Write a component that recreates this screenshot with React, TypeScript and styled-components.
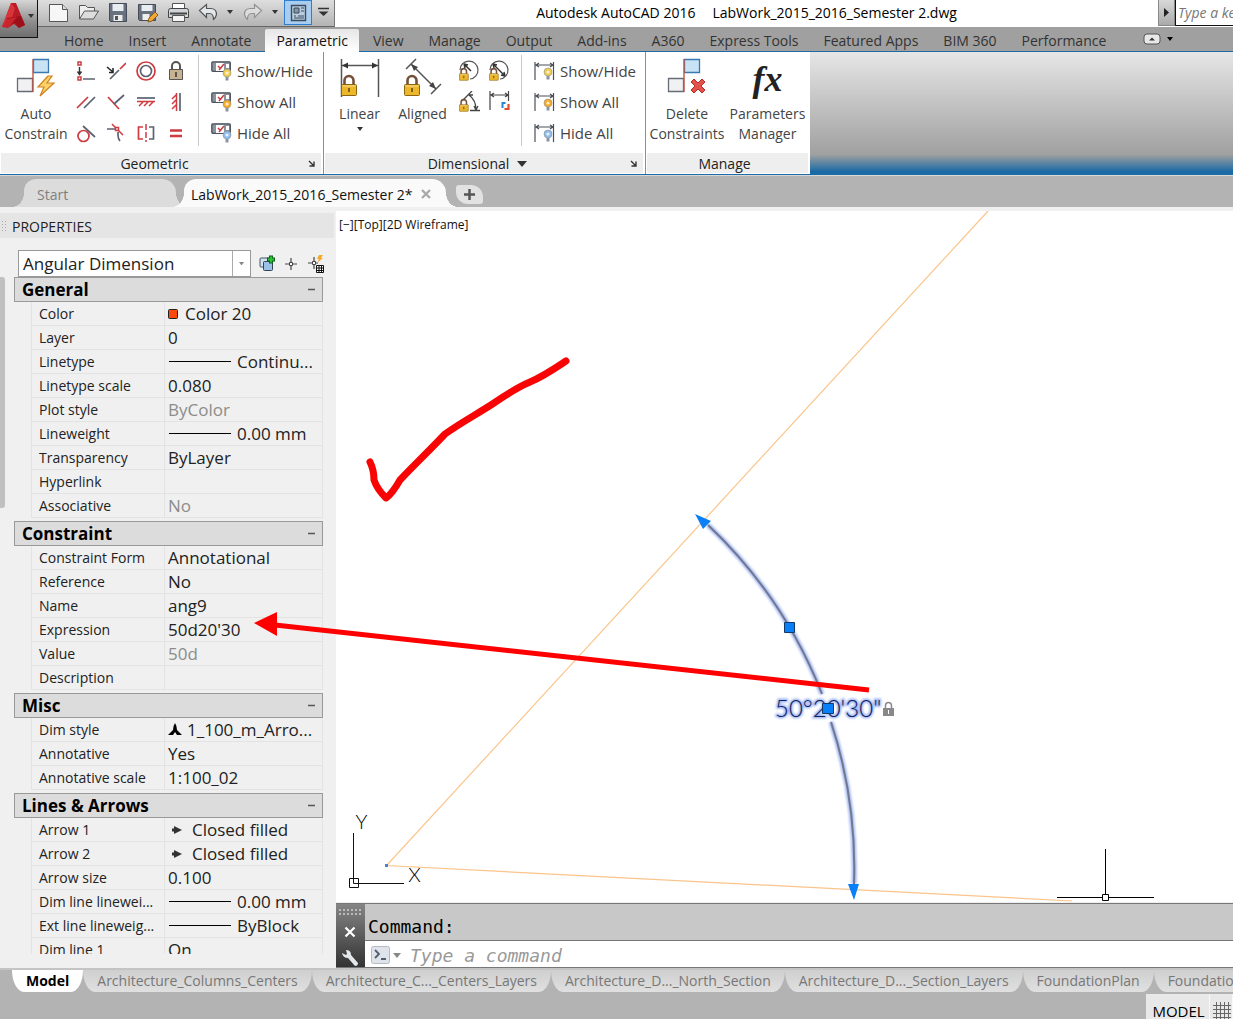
import React from "react";
import styled, { createGlobalStyle, css } from "styled-components";

const GlobalStyle = createGlobalStyle`
  *, *::before, *::after { box-sizing: border-box; }
  html, body { margin: 0; height: 100%; }
  body {
    font-family: "Open Sans", "Noto Sans", sans-serif;
    font-size: 14px;
    color: #222;
    background: #b3b3b3;
    overflow: hidden;
  }
  button, input, select { font: inherit; color: inherit; }
  button { border: 0; padding: 0; background: none; cursor: default; }
  svg { display: block; flex: none; }
  a { color: inherit; text-decoration: none; }
`;

const Shell = styled.div`
  position: relative;
  display: flex;
  flex-direction: column;
  height: 100vh;
  overflow: hidden;
`;

/* ---------- header ---------- */

const Header = styled.header`
  display: grid;
  grid-template-columns: 38px 1fr;
  grid-template-rows: 27px 25px;
  flex: none;
`;

const AppButton = styled.button`
  grid-column: 1;
  grid-row: 1 / 3;
  align-self: start;
  z-index: 1;
  height: 38px;
  display: flex;
  align-items: center;
  padding-bottom: 6px;
  border-right: 1px solid #111;
  border-bottom: 1px solid #111;
  background: linear-gradient(#d6d6d6, #8c8c8c 60%, #6f6f6f);
`;

const TitleBar = styled.div`
  grid-column: 2;
  grid-row: 1;
  display: flex;
  background: #fff;
`;

const QuickAccess = styled.div`
  display: flex;
  align-items: center;
  width: 297px;
  padding-left: 10px;
  padding-bottom: 2px;
  border-right: 1px solid #777;
  border-bottom: 1px solid #666;
  background: linear-gradient(#dedede, #b4b4b4);
`;

const QuickButton = styled.button<{ $w: number; $on?: boolean }>`
  width: ${(p) => p.$w}px;
  height: 25px;
  display: flex;
  align-items: center;
  justify-content: ${(p) => (p.$on ? "center" : "flex-start")};
  ${(p) =>
    p.$on &&
    css`
      border: 1px solid #2f7fd0;
      background: #a9cdf0;
    `}
`;

const Title = styled.h1`
  flex: 1;
  margin: 0;
  display: flex;
  justify-content: center;
  gap: 17px;
  font-size: 14px;
  font-weight: 400;
  line-height: 26px;
  color: #000;
  white-space: nowrap;
`;

const SearchToggle = styled.button`
  width: 17px;
  height: 26px;
  display: flex;
  align-items: center;
  justify-content: center;
  border: 1px solid #888;
  border-top: 0;
  background: linear-gradient(#d8d8d8, #aaa);
`;

const SearchBox = styled.input`
  width: 58px;
  height: 26px;
  padding: 0 0 0 2px;
  border: 1px solid #111;
  border-width: 0 0 1px 1px;
  border-radius: 0;
  outline: 0;
  &::placeholder { color: #777; font-style: italic; opacity: 1; }
`;

const RibbonTabs = styled.nav`
  grid-column: 1 / 3;
  grid-row: 2;
  display: flex;
  align-items: flex-end;
  padding-left: 53px;
  background: #a0a0a0;
  border-bottom: 1px solid #1d6aa5;
`;

const RibbonTab = styled.a<{ $active?: boolean }>`
  height: 22px;
  padding: 0 11px;
  margin-right: 3px;
  line-height: 23px;
  color: #333;
  white-space: nowrap;
  ${(p) =>
    p.$active &&
    css`
      height: 23px;
      margin-bottom: -1px;
      color: #111;
      background: linear-gradient(#e6e6e6, #fff);
      border-radius: 2px 2px 0 0;
    `}
`;

const RibbonToggle = styled.button`
  display: flex;
  align-items: center;
  align-self: center;
  gap: 6px;
  margin-left: 23px;
`;

/* ---------- ribbon ---------- */

const Ribbon = styled.section`
  display: flex;
  flex: none;
  height: 123px;
  border-bottom: 1px solid #1d6aa5;
  background: linear-gradient(#e6e6e6, #a0a0a0 84%, #1a6aa5 98%);
`;

const RibbonPanel = styled.section<{ $w: number }>`
  width: ${(p) => p.$w}px;
  display: flex;
  flex-direction: column;
  background: #fff;
  & + & { border-left: 1px solid #7295b0; }
`;

const PanelBody = styled.div<{ $left: number }>`
  flex: 1;
  display: flex;
  align-items: flex-start;
  padding: 3px 0 0 ${(p) => p.$left}px;
`;

const PanelFooter = styled.h2`
  display: flex;
  align-items: center;
  height: 20px;
  margin: 0 2px 1px 1px;
  padding-right: 6px;
  font-size: 14px;
  font-weight: 400;
  line-height: 20px;
  background: #eee;
`;

const FooterLabel = styled.span`
  flex: 1;
  display: flex;
  align-items: center;
  justify-content: center;
  gap: 8px;
  padding-top: 1px;
`;

const BigButton = styled.button<{ $w: number }>`
  width: ${(p) => p.$w}px;
  display: flex;
  flex-direction: column;
  align-items: center;
  padding-top: 3px;
  line-height: 20px;
  color: #444;
  white-space: nowrap;
  svg + span { margin-top: 6px; }
  span + svg { margin-top: 3px; }
`;

const FunctionGlyph = styled.i`
  height: 46px;
  font-family: "Liberation Serif", serif;
  font-size: 36px;
  font-weight: 700;
  line-height: 42px;
  color: #222;
`;

const ToolGrid = styled.div<{ $cols: number }>`
  display: grid;
  grid-template-columns: repeat(${(p) => p.$cols}, 30px);
  grid-auto-rows: 31px;
`;

const ToolButton = styled.button`
  display: flex;
  align-items: center;
  justify-content: center;
`;

const Divider = styled.div`
  width: 1px;
  height: 91px;
  margin-left: 7px;
  background: #c8c8c8;
`;

const VisibilityList = styled.div`
  display: grid;
  grid-auto-rows: 31px;
  margin-left: 12px;
`;

const VisibilityButton = styled.button`
  display: flex;
  align-items: center;
  gap: 5px;
  font-size: 15px;
  line-height: 20px;
  color: #444;
  white-space: nowrap;
`;

/* ---------- file tabs ---------- */

const FileTabs = styled.nav`
  display: flex;
  align-items: flex-end;
  flex: none;
  height: 32px;
  padding-left: 24px;
  background: #b3b3b3;
  border-top: 1px solid #d8d8d8;
`;

const FileTab = styled.a<{ $w: number; $active?: boolean }>`
  position: relative;
  display: flex;
  align-items: center;
  justify-content: space-between;
  width: ${(p) => p.$w}px;
  height: 28px;
  margin-right: 8px;
  padding: 2px ${(p) => (p.$active ? 15 : 13)}px 0 ${(p) => (p.$active ? 7 : 13)}px;
  border-radius: 12px 14px 0 0;
  white-space: nowrap;
  color: ${(p) => (p.$active ? "#111" : "#808080")};
  background: ${(p) => (p.$active ? "#fafafa" : "#dcdcdc")};
  &::before, &::after {
    content: "";
    position: absolute;
    bottom: 0;
    width: 12px;
    height: 14px;
  }
  &::before {
    left: -12px;
    background: radial-gradient(ellipse 12px 14px at 0 0, transparent 98%, ${(p) => (p.$active ? "#fafafa" : "#dcdcdc")} 100%);
  }
  &::after {
    right: -12px;
    background: radial-gradient(ellipse 12px 14px at 100% 0, transparent 98%, ${(p) => (p.$active ? "#fafafa" : "#dcdcdc")} 100%);
  }
`;

const NewTab = styled.button`
  display: flex;
  align-items: center;
  justify-content: center;
  width: 27px;
  height: 19px;
  margin: 0 0 3px 2px;
  border-radius: 3px 12px 3px 12px;
  background: #e2e2e2;
`;

/* ---------- workspace ---------- */

const Workspace = styled.main`
  flex: 1;
  min-height: 0;
  display: grid;
  grid-template-columns: 336px 1fr;
  background: #f0f0f0;
`;

const Palette = styled.aside`
  min-height: 0;
  display: flex;
  flex-direction: column;
  padding: 6px 2px 14px 0;
`;

const PaletteTitle = styled.h2`
  display: flex;
  align-items: center;
  gap: 6px;
  height: 25px;
  margin: 0 0 12px;
  padding: 1px 0 0 2px;
  font-size: 14px;
  font-weight: 400;
  background: #e5e5e5;
`;

const SelectorRow = styled.div`
  display: flex;
  align-items: center;
  gap: 8px;
  height: 27px;
  padding-left: 18px;
`;

const SelectFrame = styled.span`
  display: flex;
  width: 233px;
  height: 27px;
  border: 1px solid #999;
  background: #fff;
`;

const Select = styled.select`
  flex: 1;
  appearance: none;
  border: 0;
  padding: 0 4px;
  outline: 0;
  background: transparent;
  font-size: 17px;
  line-height: 24px;
`;

const SelectArrow = styled.span`
  display: flex;
  align-items: center;
  justify-content: center;
  width: 18px;
  border-left: 1px solid #aaa;
  pointer-events: none;
`;

const PropertyScroller = styled.div`
  flex: 1;
  min-height: 0;
  display: flex;
  gap: 9px;
  overflow: hidden;
`;

const ScrollThumb = styled.div`
  flex: none;
  width: 5px;
  height: 231px;
  border-radius: 0 3px 3px 0;
  background: #c0c0c0;
`;

const Groups = styled.div`
  width: 309px;
`;

const Group = styled.section`
  padding-bottom: 4px;
`;

const GroupHeader = styled.button`
  position: relative;
  display: flex;
  align-items: center;
  justify-content: space-between;
  width: 100%;
  height: 25px;
  padding: 0 7px;
  border: 1px solid #999;
  background: #dcdcdc;
  font-size: 17px;
  font-weight: 700;
  line-height: 20px;
  color: #000;
`;

const PropertyTable = styled.table`
  width: 292px;
  margin: -1px 0 -1px 17px;
  border-collapse: collapse;
  table-layout: fixed;
`;

const NameCell = styled.th`
  width: 133px;
  height: 24px;
  padding: 0 0 0 7px;
  border: 1px solid #e3e3e3;
  text-align: left;
  font-weight: 400;
  line-height: 20px;
  white-space: nowrap;
`;

const ValueCell = styled.td`
  height: 24px;
  padding: 0 0 0 3px;
  border: 1px solid #e3e3e3;
`;

const Value = styled.span<{ $muted?: boolean; $gap: number }>`
  display: flex;
  align-items: center;
  gap: ${(p) => p.$gap}px;
  font-size: 17px;
  line-height: 22px;
  white-space: nowrap;
  color: ${(p) => (p.$muted ? "#8c8c8c" : "#222")};
`;

const DrawingColumn = styled.div`
  min-width: 0;
  min-height: 0;
  display: flex;
  flex-direction: column;
  padding-top: 4px;
`;

const Canvas = styled.div`
  position: relative;
  flex: 1;
  min-height: 0;
  overflow: hidden;
  background: #fff;
  border-bottom: 1px solid #eee;
`;

const CanvasDrawing = styled.svg`
  position: absolute;
  inset: 0;
  width: 100%;
  height: 100%;
`;

const ViewControls = styled.div`
  position: relative;
  padding: 6px 3px;
  font-size: 12px;
  line-height: 16px;
  color: #111;
`;

const Markup = styled.svg`
  position: absolute;
  inset: 0;
  width: 100%;
  height: 100%;
  pointer-events: none;
`;

/* ---------- command line ---------- */

const CommandWindow = styled.section`
  flex: none;
  display: grid;
  grid-template-columns: 29px 1fr;
  height: 65px;
  border-top: 1px solid #777;
  border-bottom: 1px solid #777;
  font-family: "DejaVu Sans Mono", "Liberation Mono", monospace;
  font-size: 18px;
`;

const CommandStrip = styled.div`
  display: flex;
  flex-direction: column;
  align-items: center;
  justify-content: space-between;
  padding: 5px 2px 0 0;
  background: linear-gradient(#858585, #333);
`;

const CommandBody = styled.div`
  display: grid;
  grid-template-rows: 37px 1fr;
`;

const CommandHistory = styled.div`
  padding: 10px 3px 0;
  line-height: 26px;
  color: #000;
  background: #c8c8c8;
  border-bottom: 1px solid #777;
`;

const CommandEntry = styled.label`
  display: flex;
  align-items: center;
  padding: 2px 0 0 6px;
  gap: 3px;
  background: #fff;
`;

const CommandInput = styled.input`
  flex: 1;
  min-width: 0;
  height: 24px;
  padding: 0 0 0 6px;
  border: 0;
  outline: 0;
  background: transparent;
  &::placeholder { color: #999; font-style: italic; opacity: 1; }
`;

/* ---------- layout tabs and status bar ---------- */

const LayoutTabs = styled.nav`
  display: flex;
  flex: none;
  height: 24px;
  padding-left: 12px;
  border-top: 2px solid #c4c4c4;
  overflow: hidden;
`;

const LayoutTab = styled.a<{ $active?: boolean }>`
  flex: none;
  height: 22px;
  padding: 0 14px;
  border-radius: 0 0 12px 12px / 0 0 22px 22px;
  line-height: 22px;
  white-space: nowrap;
  color: ${(p) => (p.$active ? "#000" : "#777")};
  font-weight: ${(p) => (p.$active ? 700 : 400)};
  background: ${(p) => (p.$active ? "#fff" : "linear-gradient(#cfcfcf, #e0e0e0)")};
`;

const StatusBar = styled.footer`
  display: flex;
  justify-content: flex-end;
  flex: none;
  height: 27px;
  padding-top: 2px;
`;

const StatusButton = styled.button<{ $w: number }>`
  width: ${(p) => p.$w}px;
  display: flex;
  align-items: center;
  justify-content: center;
  padding: 8px 0 0 2px;
  overflow: hidden;
  font-size: 15px;
  line-height: 20px;
  color: #000;
  background: #e8e8e8;
  border-right: 1px solid #f8f8f8;
`;

/* ---------- icons ---------- */

const Caret = ({ w = 6, color = "#333" }: { w?: number; color?: string }) => (
  <svg width={w} height={w / 2 + 1} viewBox="0 0 8 4" preserveAspectRatio="none"><path d="M0 0h8L4 4z" fill={color} /></svg>
);

const Padlock = ({ x, y, s = 1 }: { x: number; y: number; s?: number }) => (
  <g transform={`translate(${x} ${y}) scale(${s})`}>
    <path d="M3.500 10V5.500a4.500 4.500 0 0 1 9 0V10" fill="none" stroke="#74503a" strokeWidth="2.600" />
    <rect x="0.500" y="9.500" width="15" height="11" rx="1" fill="#edb72c" stroke="#8d6410" />
    <path d="M1.500 11h13" stroke="#fff" strokeOpacity=".5" />
    <path d="M8 13v4" stroke="#5d430e" strokeWidth="1.500" />
  </g>
);

const AutodeskLogo = () => (
  <svg width="28" height="30" viewBox="0 0 28 30">
    <path d="M11 2h5l9 22-6 3-5-4-6 4-6-1z" fill="#b81c26" />
    <path d="M11 2L2 26l6 0 4-9 3-10z" fill="#d9343a" />
    <path d="M7 17l14-2 4 9-6 3-4-5-9 2z" fill="#9c1019" />
    <path d="M2 26l5-8 10-2-8 10z" fill="#c8252d" />
  </svg>
);

const quickIcons: Record<string, React.ReactNode> = {
  new: <><path d="M1.500 3.500h13l5 5v12h-18z" fill="#f6f6f6" stroke="#555" /><path d="M14.500 3.500v5h5" fill="#ddd" stroke="#555" /></>,
  open: <><path d="M1.500 18V4.500h6l2 2h7V10" fill="#eee" stroke="#555" /><path d="M1.500 18l5-8h14l-5 8z" fill="#ddd" stroke="#555" /></>,
  save: <><path d="M1.500 2.500h17v18h-16l-1-1z" fill="#68717d" stroke="#444c57" /><path d="M4.500 3h11v7h-11z" fill="#e8edf2" /><path d="M5.500 14h9v6h-9z" fill="#eee" /><path d="M7 15h3v4H7z" fill="#555" /></>,
  saveAs: <><path d="M.500 3.500h17v16h-16l-1-1z" fill="#68717d" stroke="#444c57" /><path d="M3.500 4h11v6h-11z" fill="#e8edf2" /><path d="M4.500 13h7v6h-7z" fill="#eee" /><path d="M10 21l1-4 6-6 3 3-6 6z" fill="#f2a832" stroke="#8d5a14" /></>,
  print: <><path d="M4.500 9V2.500h12V9" fill="#fff" stroke="#555" /><path d="M.500 9.500q0-2 2-2h16q2 0 2 2v7H.500z" fill="#d0d3d7" stroke="#444" /><path d="M2 12.500h17" stroke="#444" strokeWidth="2" /><path d="M4.500 14.500h12v6h-12z" fill="#f4f4f4" stroke="#555" /></>,
  undo: <path d="M1.500 9.500l7-6v4h4q6 0 6 6-1 4-3 5 0-6-4-6h-3v4z" fill="#e3e6ea" stroke="#555" strokeWidth="1.200" />,
  redo: <path d="M18.500 9.500l-7-6v4h-4q-6 0-6 6 1 4 3 5 0-6 4-6h3v4z" fill="#ddd" stroke="#929292" strokeWidth="1.200" />,
  layout: <><path d="M3.500 4.500h14v15h-14z" fill="#b9cde0" stroke="#3c4b5b" strokeWidth="1.400" /><path d="M6 7h5v5H6z" fill="#8395a7" stroke="#3c4b5b" /><path d="M13 7h3M13 10h3M6 15h2M10 15h6M6 17h10" stroke="#3c4b5b" /></>,
};

const QuickIcon = ({ name }: { name: string }) => <svg width="21" height="23" viewBox="0 0 21 23">{quickIcons[name]}</svg>;

const gray = "#5b6270";
const red = "#cf3b3f";
const tools: [string, React.ReactNode][] = [
  ["Coincident", <><path d="M2 1h3v3H2zM2 16h3v3H2z" fill="#fff" stroke={red} strokeWidth="1.500" /><path d="M3.500 6v7M1.500 10.500l2 3 2-3" stroke="#333" fill="none" strokeWidth="1.400" /><path d="M7 18h12" stroke={gray} strokeWidth="1.500" /></>],
  ["Collinear", <><path d="M4 18L13 9" stroke={gray} strokeWidth="1.700" /><path d="M14 8l6-6" stroke={red} strokeWidth="1.700" /><path d="M1 6l6 5M7 7v4.500H3" stroke="#222" fill="none" strokeWidth="1.500" /></>],
  ["Concentric", <><circle cx="10" cy="10" r="9" fill="none" stroke={red} strokeWidth="1.700" /><circle cx="10" cy="10" r="5.500" fill="none" stroke={gray} strokeWidth="1.700" /></>],
  ["Fix", <g><path d="M6 9V5a4 4 0 0 1 8 0v4" fill="none" stroke="#555" strokeWidth="2" /><path d="M3.500 8.500h13v10h-13z" fill="#c7b292" stroke="#555" /><path d="M10 11v5" stroke="#333" strokeWidth="1.500" /></g>],
  ["Parallel", <><path d="M1 16L12 5" stroke={red} strokeWidth="1.700" /><path d="M8 16L19 5" stroke={gray} strokeWidth="1.700" /></>],
  ["Perpendicular", <><path d="M2 5l11 12" stroke={red} strokeWidth="1.700" /><path d="M8 12l10-9" stroke={gray} strokeWidth="1.700" /></>],
  ["Horizontal", <><path d="M1 6h18" stroke={gray} strokeWidth="1.700" /><path d="M1 9.500h18M3 14l4-4M8 14l4-4M13 14l4-4" stroke={red} strokeWidth="1.500" /></>],
  ["Vertical", <><path d="M14 1v18" stroke={gray} strokeWidth="1.700" /><path d="M10.500 1v18M10 3L6 7M10 8l-4 4M10 13l-4 4" stroke={red} strokeWidth="1.500" /></>],
  ["Tangent", <><path d="M7 3l12 11" stroke={gray} strokeWidth="1.700" /><circle cx="7.500" cy="13" r="5.500" fill="none" stroke={red} strokeWidth="1.700" /></>],
  ["Smooth", <><path d="M1 6h8M12 9v3q0 4 2 6" fill="none" stroke={gray} strokeWidth="1.700" /><path d="M6 1l11 11" stroke={red} strokeWidth="1.500" /><path d="M9.500 4.500h3v3h-3z" fill="#fff" stroke={red} strokeWidth="1.500" /></>],
  ["Symmetric", <><path d="M7 4H2.500v12H7" fill="none" stroke={red} strokeWidth="1.700" /><path d="M10 1v18" stroke={red} strokeWidth="1.500" strokeDasharray="6 2" /><path d="M13 4h4.500v12H13" fill="none" stroke={gray} strokeWidth="1.700" /></>],
  ["Equal", <path d="M4 7.500h12M4 13h12" stroke={red} strokeWidth="2.400" />],
];

const BulbTip = ({ color, x, y }: { color: string; x: number; y: number }) => (
  <g transform={`translate(${x} ${y})`}>
    <circle cx="4" cy="4" r="4" fill={color} stroke="#8f8f8f" strokeWidth=".6" />
    <circle cx="4" cy="4" r="1.600" fill="#fff" fillOpacity=".8" />
    <path d="M2.500 8h3v3.500h-3z" fill="#8b94a0" />
  </g>
);

const GeoVis = ({ color }: { color: string }) => (
  <svg width="21" height="20" viewBox="0 0 21 20">
    <rect x=".800" y=".800" width="18.500" height="9.500" rx="1" fill="#8d939d" stroke="#4b515c" strokeWidth="1.300" />
    <path d="M5 2h8v8H5zM15 3h3v4h-3z" fill="#fff" />
    <path d="M7 5l3 3M8 9L13 3" stroke={red} strokeWidth="1.500" />
    <BulbTip color={color} x={12} y={8} />
  </svg>
);

const DimVis = ({ color }: { color: string }) => (
  <svg width="21" height="20" viewBox="0 0 21 20">
    <path d="M1 1v18M19.500 1v18M2 4h17M5 2L2 4l3 2M16 2l3 2-3 2" fill="none" stroke="#4b5059" strokeWidth="1.200" />
    <BulbTip color={color} x={10} y={7} />
  </svg>
);

const bulbs = ["#f4cc4c", "#f9ab22", "#8fbdf0"];
const visLabels = ["Show/Hide", "Show All", "Hide All"];

const ConstraintBoxes = ({ kind }: { kind: "auto" | "delete" }) => (
  <svg width="40" height="40" viewBox="0 0 40 40">
    <path d="M1.500 20.500h15v13h-15z" fill="#f1f1f3" stroke="#666c76" strokeWidth="1.300" />
    <path d="M17.500 1.500h15v13h-15z" fill="#c8e3f3" stroke="#3a78b4" strokeWidth="1.300" />
    <path d="M17 1v33" stroke="#c25544" strokeWidth="1.400" />
    {kind === "auto" ? (
      <path d="M32 18l-10 11h6l-4 9 14-13h-7l5-7z" fill="#fbd36a" stroke="#d2821d" strokeWidth="1.200" />
    ) : (
      <path d="M24 24l3-3 4 4 4-4 3 3-4 4 4 4-3 3-4-4-4 4-3-3 4-4z" fill="#e0524a" stroke="#b92d28" />
    )}
  </svg>
);

const LinearIcon = () => (
  <svg width="40" height="40" viewBox="0 0 40 40">
    <path d="M1.500 1v38M38.500 1v38M2 7.500h36" fill="none" stroke="#555" strokeWidth="1.500" />
    <path d="M2 7.500l6-3v6zM38 7.500l-6-3v6z" fill="#333" />
    <Padlock x={1} y={17} />
  </svg>
);

const AlignedIcon = () => (
  <svg width="40" height="40" viewBox="0 0 40 40">
    <path d="M3 11L13 1M28 36l10-10M8 6l25 25" stroke="#555" strokeWidth="1.500" />
    <path d="M8 6l7 3-4 4zM33 31l-7-3 4-4z" fill="#444" />
    <Padlock x={1} y={17} />
  </svg>
);

const dimTools: [string, React.ReactNode][] = [
  ["Radius", <><path d="M1 10a9 9 0 1 1 10 9" fill="none" stroke="#555" strokeWidth="1.200" /><path d="M12 11L5 4M5 4l4 1M5 4l1 4" fill="none" stroke="#333" strokeWidth="1.500" /><Padlock x={0} y={8} s={0.6} /></>],
  ["Diameter", <><path d="M1 10a9 9 0 1 1 10 9" fill="none" stroke="#555" strokeWidth="1.200" /><path d="M4 4l12 12M4 4l4 1M4 4l1 4M16 16l-1-4M16 16l-4-1" fill="none" stroke="#333" strokeWidth="1.400" /><Padlock x={0} y={8} s={0.6} /></>],
  ["Angular", <><path d="M4 9L13 0M11 19.500h10M10 4q7 5 7 15M10 4h4M17 19l-2-4M17 19l2-4" fill="none" stroke="#444" strokeWidth="1.300" /><Padlock x={0} y={8} s={0.6} /></>],
  ["Convert", <><path d="M1 0v19M19.500 0v10M2 4h17M5 2L2 4l3 2M16 2l3 2-3 2" fill="none" stroke="#444" strokeWidth="1.200" /><path d="M13.500 17v-5h3" fill="none" stroke="#2b84cc" strokeWidth="2" /><path d="M19.500 13v5h-4" fill="none" stroke="#e04a2e" strokeWidth="2.200" /></>],
];

const Launcher = () => (
  <svg width="7" height="7" viewBox="0 0 7 7"><path d="M1 1l5 5M6 1.500V6H1.500" fill="none" stroke="#333" strokeWidth="1.400" /></svg>
);

const SelectionIcons = () => (
  <>
    <svg width="16" height="18" viewBox="0 0 16 18"><rect x="1" y="3" width="9" height="9" rx="1" fill="#d5e2ef" stroke="#456" /><rect x="4.500" y="6.500" width="9" height="9" rx="1" fill="#9cc0e8" stroke="#345" /><path d="M8 4.500h8M12 .500v8" stroke="#0f5f18" strokeWidth="4" /><path d="M9 4.500h6M12 1.500v6" stroke="#2fc03a" strokeWidth="2.200" /></svg>
    <svg width="16" height="18" viewBox="0 0 16 18"><path d="M2 9h4M10 9h4M8 3v4M8 11v4" stroke="#444" strokeWidth="1.200" /><path d="M6.500 7.500h3v3h-3z" fill="#fff" stroke="#444" /></svg>
    <svg width="18" height="20" viewBox="0 0 18 20"><path d="M1 9h4M9 9h2M7 3v4M7 11v4" stroke="#444" strokeWidth="1.200" /><path d="M5.500 7.500h3v3h-3z" fill="#fff" stroke="#444" /><path d="M12 1h4l-2 3h2l-6 5 2-4h-2z" fill="#f6a929" /><path d="M9.500 11.500h7v7h-7z" fill="#fff" stroke="#111" /><path d="M9 14h8M9 16.500h8M12 11v8M14.500 11v8" stroke="#111" /></svg>
  </>
);

/* ---------- data ---------- */

type Mark = "swatch" | "line" | "annot" | "arrow";
type Prop = { name: string; value: string; muted?: boolean; mark?: Mark };

const marks: Record<Mark, { gap: number; icon: React.ReactNode }> = {
  swatch: { gap: 7, icon: <svg width="10" height="10"><rect x=".500" y=".500" width="9" height="9" rx="1" fill="#fb4a0a" stroke="#222" /></svg> },
  line: { gap: 6, icon: <svg width="63" height="3"><path d="M1 1.500h62" stroke="#000" /></svg> },
  annot: { gap: 5, icon: <svg width="14" height="14" viewBox="0 0 14 14"><path d="M7 0q2 3 2 7l5 5H9L7 9l-2 3H0l5-5q0-4 2-7z" fill="#000" /></svg> },
  arrow: { gap: 9, icon: <svg width="15" height="10" viewBox="0 0 15 10"><path d="M4 3.500h2V1l8 4-8 4V6.500H4z" fill="#333" /></svg> },
};

const groups: { title: string; props: Prop[] }[] = [
  {
    title: "General",
    props: [
      { name: "Color", value: "Color 20", mark: "swatch" },
      { name: "Layer", value: "0" },
      { name: "Linetype", value: "Continu...", mark: "line" },
      { name: "Linetype scale", value: "0.080" },
      { name: "Plot style", value: "ByColor", muted: true },
      { name: "Lineweight", value: "0.00 mm", mark: "line" },
      { name: "Transparency", value: "ByLayer" },
      { name: "Hyperlink", value: "" },
      { name: "Associative", value: "No", muted: true },
    ],
  },
  {
    title: "Constraint",
    props: [
      { name: "Constraint Form", value: "Annotational" },
      { name: "Reference", value: "No" },
      { name: "Name", value: "ang9" },
      { name: "Expression", value: "50d20'30" },
      { name: "Value", value: "50d", muted: true },
      { name: "Description", value: "" },
    ],
  },
  {
    title: "Misc",
    props: [
      { name: "Dim style", value: "1_100_m_Arro...", mark: "annot" },
      { name: "Annotative", value: "Yes" },
      { name: "Annotative scale", value: "1:100_02" },
    ],
  },
  {
    title: "Lines & Arrows",
    props: [
      { name: "Arrow 1", value: "Closed filled", mark: "arrow" },
      { name: "Arrow 2", value: "Closed filled", mark: "arrow" },
      { name: "Arrow size", value: "0.100" },
      { name: "Dim line linewei...", value: "0.00 mm", mark: "line" },
      { name: "Ext line lineweig...", value: "ByBlock", mark: "line" },
      { name: "Dim line 1", value: "On" },
    ],
  },
];

const ribbonTabs = ["Home", "Insert", "Annotate", "Parametric", "View", "Manage", "Output", "Add-ins", "A360", "Express Tools", "Featured Apps", "BIM 360", "Performance"];

const layoutTabs = ["Model", "Architecture_Columns_Centers", "Architecture_C..._Centers_Layers", "Architecture_D..._North_Section", "Architecture_D..._Section_Layers", "FoundationPlan", "Foundatio"];

/* ---------- drawing ---------- */

const Drawing = () => (
  <CanvasDrawing aria-label="Angular dimension drawing">
    <defs>
      <filter id="halo" x="-20%" y="-20%" width="140%" height="140%"><feGaussianBlur stdDeviation="1" /></filter>
    </defs>
    <g transform="translate(-336 -211)">
      <path d="M988 211L386.500 865.500L1072 901" fill="none" stroke="#fbc48b" strokeWidth="1.200" />
      <path d="M385 864h3v3h-3z" fill="#4a7fd0" />
      <g fill="none">
        <path d="M708 525A468 468 0 0 1 822 694M831 722A468 468 0 0 1 854 884" stroke="#a3b9f3" strokeWidth="5" filter="url(#halo)" />
        <path d="M708 525A468 468 0 0 1 822 694M831 722A468 468 0 0 1 854 884" stroke="#74788f" strokeWidth="2" />
      </g>
      <path d="M695 514l16 7-8 8zM848 884h11l-5 16z" fill="#0a80f8" />
      <g fontFamily="Lato, sans-serif" fontSize="24" fontWeight="300">
        <text x="775" y="717" fill="none" stroke="#9db4f4" strokeWidth="3" filter="url(#halo)">50°20'30"</text>
        <text x="775" y="717" fill="#14225c">50°20'30"</text>
      </g>
      <path d="M784.500 622.500h10v10h-10zM822.500 703.500h11v10h-11z" fill="#0a80f8" stroke="#123a66" />
      <path d="M885.500 708v-2.500a3 3 0 0 1 6 0V708" fill="none" stroke="#888" strokeWidth="1.500" />
      <path d="M883 708h11v8h-11z" fill="#888" />
      <path d="M888.500 710v4" stroke="#fff" />
      <path d="M353.500 833v50.500H404M349.500 878.500h9v9h-9z" fill="none" stroke="#111" />
      <g fontFamily="Lato, sans-serif" fontWeight="300" fontSize="20" fill="#000" textAnchor="middle">
        <text x="361.500" y="829">Y</text>
        <text x="414.500" y="882">X</text>
      </g>
      <path d="M1105.500 849v46M1057 897.500h45M1109 897.500h45M1102.500 894.500h6v6h-6z" fill="none" stroke="#000" />
      <path d="M370 462q4 8 4 18 3 9 12 18 6-4 14-18c15-16 30-30 45-46 18-13 34-21 49-31 16-11 24-16 36-21 14-6 24-13 36-21" fill="none" stroke="#f80404" strokeWidth="7" strokeLinecap="round" strokeLinejoin="round" />
    </g>
  </CanvasDrawing>
);

export default function App() {
  return (
    <Shell>
      <GlobalStyle />
      <Header>
        <AppButton aria-label="Application menu"><AutodeskLogo /><Caret w={6} /></AppButton>
        <TitleBar>
          <QuickAccess>
            <QuickButton $w={30} aria-label="New"><QuickIcon name="new" /></QuickButton>
            <QuickButton $w={30} aria-label="Open"><QuickIcon name="open" /></QuickButton>
            <QuickButton $w={30} aria-label="Save"><QuickIcon name="save" /></QuickButton>
            <QuickButton $w={30} aria-label="Save As"><QuickIcon name="saveAs" /></QuickButton>
            <QuickButton $w={30} aria-label="Plot"><QuickIcon name="print" /></QuickButton>
            <QuickButton $w={29} aria-label="Undo"><QuickIcon name="undo" /></QuickButton>
            <QuickButton $w={16} aria-label="Undo list"><Caret /></QuickButton>
            <QuickButton $w={29} aria-label="Redo"><QuickIcon name="redo" /></QuickButton>
            <QuickButton $w={12} aria-label="Redo list"><Caret /></QuickButton>
            <QuickButton $w={28} $on aria-label="Workspace"><QuickIcon name="layout" /></QuickButton>
            <QuickButton $w={22} aria-label="Customize">
              <svg width="18" height="10" viewBox="0 0 18 10"><path d="M6 1.500h11" stroke="#333" strokeWidth="1.500" /><path d="M6.500 4.500h10l-5 4.500z" fill="#333" /></svg>
            </QuickButton>
          </QuickAccess>
          <Title><span>Autodesk AutoCAD 2016</span><span>LabWork_2015_2016_Semester 2.dwg</span></Title>
          <SearchToggle aria-label="Search"><svg width="5" height="9"><path d="M0 0l5 4.500L0 9z" fill="#222" /></svg></SearchToggle>
          <SearchBox aria-label="Keyword" placeholder="Type a keyword" />
        </TitleBar>
        <RibbonTabs>
          {ribbonTabs.map((t) => <RibbonTab key={t} href="#" $active={t === "Parametric"}>{t}</RibbonTab>)}
          <RibbonToggle aria-label="Minimize ribbon">
            <svg width="18" height="12" viewBox="0 0 18 12"><rect x="1" y="1" width="16" height="10" rx="3" fill="#e8e8e8" stroke="#555" /><path d="M6 7.500h6L9 4.500z" fill="#333" /></svg>
            <Caret color="#000" />
          </RibbonToggle>
        </RibbonTabs>
      </Header>

      <Ribbon>
        <RibbonPanel $w={323}>
          <PanelBody $left={1}>
            <BigButton $w={70}><ConstraintBoxes kind="auto" /><span>Auto<br />Constrain</span></BigButton>
            <ToolGrid $cols={4}>
              {tools.map(([label, icon]) => <ToolButton key={label} aria-label={label}><svg width="20" height="20" viewBox="0 0 20 20">{icon}</svg></ToolButton>)}
            </ToolGrid>
            <Divider />
            <VisibilityList>
              {visLabels.map((l, i) => <VisibilityButton key={l}><GeoVis color={bulbs[i]} />{l}</VisibilityButton>)}
            </VisibilityList>
          </PanelBody>
          <PanelFooter><FooterLabel>Geometric</FooterLabel><Launcher /></PanelFooter>
        </RibbonPanel>
        <RibbonPanel $w={322}>
          <PanelBody $left={4}>
            <BigButton $w={63}><LinearIcon /><span>Linear</span><Caret w={6} /></BigButton>
            <BigButton $w={63}><AlignedIcon /><span>Aligned</span></BigButton>
            <ToolGrid $cols={2}>
              {dimTools.map(([label, icon]) => <ToolButton key={label} aria-label={label}><svg width="21" height="21" viewBox="0 0 21 21">{icon}</svg></ToolButton>)}
            </ToolGrid>
            <Divider />
            <VisibilityList>
              {visLabels.map((l, i) => <VisibilityButton key={l}><DimVis color={bulbs[i]} />{l}</VisibilityButton>)}
            </VisibilityList>
          </PanelBody>
          <PanelFooter><FooterLabel>Dimensional<Caret w={10} /></FooterLabel><Launcher /></PanelFooter>
        </RibbonPanel>
        <RibbonPanel $w={165}>
          <PanelBody $left={0}>
            <BigButton $w={82}><ConstraintBoxes kind="delete" /><span>Delete<br />Constraints</span></BigButton>
            <BigButton $w={79}>
              <FunctionGlyph>fx</FunctionGlyph>
              <span>Parameters<br />Manager</span>
            </BigButton>
          </PanelBody>
          <PanelFooter><FooterLabel>Manage</FooterLabel></PanelFooter>
        </RibbonPanel>
      </Ribbon>

      <FileTabs>
        <FileTab href="#" $w={152}>Start</FileTab>
        <FileTab href="#" $w={262} $active>
          LabWork_2015_2016_Semester 2*
          <svg width="10" height="10" viewBox="0 0 10 10"><path d="M1 1l8 8M9 1L1 9" stroke="#aaa" strokeWidth="2.400" /></svg>
        </FileTab>
        <NewTab aria-label="New drawing"><svg width="11" height="11"><path d="M5.500 0v11M0 5.500h11" stroke="#555" strokeWidth="2.500" /></svg></NewTab>
      </FileTabs>

      <Workspace>
        <Palette>
          <PaletteTitle>
            <svg width="4" height="10"><path d="M.500 0v10M3.500 0v10" stroke="#aaa" strokeDasharray="1 2" /></svg>
            PROPERTIES
          </PaletteTitle>
          <SelectorRow>
            <SelectFrame>
              <Select aria-label="Object type"><option>Angular Dimension</option></Select>
              <SelectArrow><Caret w={5} color="#888" /></SelectArrow>
            </SelectFrame>
            <SelectionIcons />
          </SelectorRow>
          <PropertyScroller>
            <ScrollThumb />
            <Groups>
              {groups.map((g) => (
                <Group key={g.title}>
                  <GroupHeader>{g.title}<svg width="7" height="4"><path d="M0 1.500h7" stroke="#555" strokeWidth="1.500" /></svg></GroupHeader>
                  <PropertyTable>
                    <tbody>
                      {g.props.map((p) => (
                        <tr key={p.name}>
                          <NameCell scope="row">{p.name}</NameCell>
                          <ValueCell>
                            <Value $muted={p.muted} $gap={p.mark ? marks[p.mark].gap : 0}>
                              {p.mark && marks[p.mark].icon}{p.value}
                            </Value>
                          </ValueCell>
                        </tr>
                      ))}
                    </tbody>
                  </PropertyTable>
                </Group>
              ))}
            </Groups>
          </PropertyScroller>
        </Palette>

        <DrawingColumn>
          <Canvas>
            <Drawing />
            <ViewControls>[−][Top][2D Wireframe]</ViewControls>
          </Canvas>
          <CommandWindow>
            <CommandStrip>
              <svg width="22" height="6"><path d="M0 1h22M0 5h22" stroke="#bbb" strokeWidth="2" strokeDasharray="2 2" /></svg>
              <svg width="12" height="12"><path d="M1.500 1.500l9 9M10.500 1.500l-9 9" stroke="#fff" strokeWidth="2.200" /></svg>
              <svg width="18" height="18" viewBox="0 0 18 18"><path d="M1 4l4 2 1-1-1-4q5 0 5 5l7 8q0 3-3 3l-7-8Q2 9 1 4z" fill="#e4e7ea" /></svg>
            </CommandStrip>
            <CommandBody>
              <CommandHistory>Command:</CommandHistory>
              <CommandEntry>
                <svg width="19" height="18" viewBox="0 0 19 18"><rect x=".500" y=".500" width="18" height="17" rx="2" fill="#dfe3ea" stroke="#b5bac4" /><path d="M4 4l4 4-4 4M10 13h5" fill="none" stroke="#555e70" strokeWidth="1.800" /></svg>
                <Caret w={8} color="#888" />
                <CommandInput aria-label="Command" placeholder="Type a command" />
              </CommandEntry>
            </CommandBody>
          </CommandWindow>
        </DrawingColumn>
      </Workspace>

      <LayoutTabs>
        {layoutTabs.map((t, i) => <LayoutTab key={t} href="#" $active={i === 0}>{t}</LayoutTab>)}
      </LayoutTabs>
      <StatusBar>
        <StatusButton $w={64}>MODEL</StatusButton>
        <StatusButton $w={23} aria-label="Grid">
          <svg width="18" height="18"><path d="M3.500 0v18M7.500 0v18M11.500 0v18M15.500 0v18M0 3.500h18M0 7.500h18M0 11.500h18M0 15.500h18" stroke="#666" /></svg>
        </StatusButton>
      </StatusBar>

      <Markup aria-hidden="true">
        <path d="M275 625L869 690" stroke="#f00" strokeWidth="5" />
        <path d="M254 623l23-11v24z" fill="#f00" />
      </Markup>
    </Shell>
  );
}
